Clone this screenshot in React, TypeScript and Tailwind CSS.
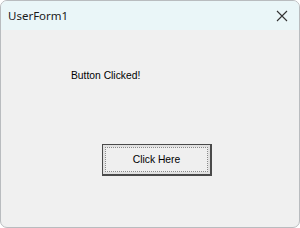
import React from 'react';

const App: React.FC = () => {
    return (
        <div className="w-[300px] h-[228px] bg-white">
            <div className="w-full h-full flex flex-col rounded-[7px] border border-[#b9bcbf] overflow-hidden bg-[#f0f0f0]">
                {/* Title bar */}
                <header className="h-[29px] shrink-0 flex items-center justify-between pl-[7px] pr-[11px] bg-[#eaf6f8]">
                    <span className="text-[11.5px] text-[#1a1a1a]" style={{ fontFamily: '"Noto Sans", sans-serif' }}>
                        UserForm1
                    </span>
                    <svg width="12" height="12" viewBox="0 0 12 12" className="text-[#333]">
                        <path d="M1 1 L11 11 M11 1 L1 11" stroke="currentColor" strokeWidth="1.1" fill="none" />
                    </svg>
                </header>

                {/* Form body */}
                <div className="flex-1 flex flex-col" style={{ fontFamily: '"Liberation Sans", Arial, sans-serif' }}>
                    <p className="mt-[38px] ml-[70px] text-[10.3px] text-black">Button Clicked!</p>
                    <div className="mt-[61px] ml-[101px]">
                        <button className="w-[110px] h-[32px] bg-[#e1e1e1] border border-[#4a4a4a] border-b-2 border-r-2 p-[2px] flex">
                            <span className="flex-1 flex items-center justify-center border border-dotted border-[#8a8a8a] bg-[#efefef] text-[10.3px] text-black">
                                Click Here
                            </span>
                        </button>
                    </div>
                </div>
            </div>
        </div>
    );
};

export default App;
